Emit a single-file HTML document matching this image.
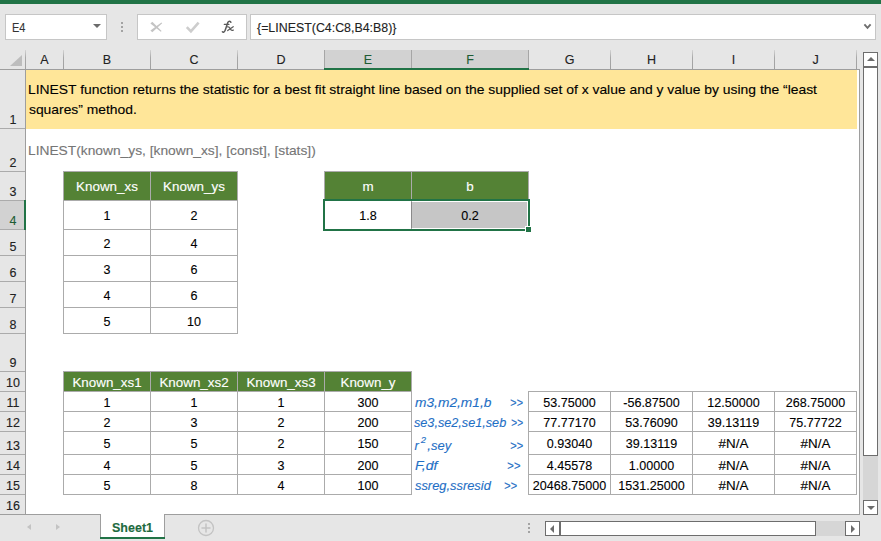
<!DOCTYPE html>
<html><head><meta charset="utf-8"><style>
html,body{margin:0;padding:0;}
body{width:881px;height:541px;overflow:hidden;position:relative;background:#e6e6e6;font-family:"Liberation Sans", sans-serif;}
body>div,body>svg{position:absolute;}
sup{font-size:9px;}
body>div{-webkit-text-stroke:0.12px currentColor;}
</style></head><body>
<div style="left:0px;top:0px;width:881px;height:4px;background:#217346;"></div>
<div style="left:5px;top:14px;width:102px;height:26px;background:#fff;border:1px solid #c6c6c6;box-sizing:border-box;"></div>
<div style="top:18.67px;font-size:12.5px;line-height:18px;color:#333;font-family:'Liberation Sans', sans-serif;white-space:pre;left:12.00px;transform:scaleX(0.8800);transform-origin:0 0;">E4</div>
<div style="left:92.5px;top:24px;width:0;height:0;border-left:4px solid transparent;border-right:4px solid transparent;border-top:4.5px solid #6b6b6b;"></div>
<div style="left:121px;top:22px;width:2px;height:2px;background:#a3a3a3;"></div>
<div style="left:121px;top:26px;width:2px;height:2px;background:#a3a3a3;"></div>
<div style="left:121px;top:30px;width:2px;height:2px;background:#a3a3a3;"></div>
<div style="left:137px;top:14px;width:110px;height:26px;background:#fff;border:1px solid #c6c6c6;box-sizing:border-box;"></div>
<svg style="left:0;top:0" width="881" height="50"><g fill="none" stroke-linecap="butt"><path d="M150.4 23.4 L152.3 21.8 L161.6 30.9 L160.8 31.8 Z M161.4 22.4 L162.2 23.3 L152.3 32.2 L150.4 30.5 Z" fill="#c4c4c4" stroke="none"/><path d="M186.8 27.2 L190.9 31.4 L198.6 22.6" stroke="#cdcdcd" stroke-width="2.6"/></g></svg>
<svg style="left:0;top:0" width="260" height="50"><g fill="none" stroke="#5a5a5a" stroke-linecap="round"><path d="M230.9 22.3 C230.5 20.9 228.6 20.8 227.9 22.3 L225.1 30.4 C224.6 32.1 223.2 32.6 222.4 31.8" stroke-width="1.5"/><path d="M224.3 24.4 H228.9" stroke-width="1.2"/><path d="M227.6 26.9 C228.8 26.5 229.4 27.1 230 28.3 L230.5 29.3 C231 30.3 232 30.6 233.3 30.1" stroke-width="1.3"/><path d="M233.2 26.7 L227.7 30.6" stroke-width="1.2"/></g></svg>
<div style="left:250px;top:14px;width:626px;height:26px;background:#fff;border:1px solid #c6c6c6;box-sizing:border-box;"></div>
<div style="top:19.70px;font-size:12.4px;line-height:17px;color:#222;font-family:'Liberation Sans', sans-serif;white-space:pre;left:257px;">{=LINEST(C4:C8,B4:B8)}</div>
<svg style="left:850px;top:14px" width="30" height="26"><path d="M14.4 10.4 L17.5 13.8 L20.6 10.4" fill="none" stroke="#6e6e6e" stroke-width="1.9"/></svg>
<div style="left:325px;top:50px;width:204px;height:18px;background:#d2d2d2;"></div>
<div style="left:25px;top:50px;width:1px;height:19px;background:linear-gradient(#d4d4d4, #a8a8a8 40%, #a0a0a0);"></div>
<div style="left:63px;top:50px;width:1px;height:19px;background:linear-gradient(#d4d4d4, #a8a8a8 40%, #a0a0a0);"></div>
<div style="left:150px;top:50px;width:1px;height:19px;background:linear-gradient(#d4d4d4, #a8a8a8 40%, #a0a0a0);"></div>
<div style="left:237px;top:50px;width:1px;height:19px;background:linear-gradient(#d4d4d4, #a8a8a8 40%, #a0a0a0);"></div>
<div style="left:324px;top:50px;width:1px;height:19px;background:#a6a6a6;"></div>
<div style="left:411px;top:50px;width:1px;height:19px;background:#a6a6a6;"></div>
<div style="left:528px;top:50px;width:1px;height:19px;background:#a6a6a6;"></div>
<div style="left:610px;top:50px;width:1px;height:19px;background:linear-gradient(#d4d4d4, #a8a8a8 40%, #a0a0a0);"></div>
<div style="left:692px;top:50px;width:1px;height:19px;background:linear-gradient(#d4d4d4, #a8a8a8 40%, #a0a0a0);"></div>
<div style="left:774px;top:50px;width:1px;height:19px;background:linear-gradient(#d4d4d4, #a8a8a8 40%, #a0a0a0);"></div>
<div style="left:856px;top:50px;width:1px;height:19px;background:linear-gradient(#d4d4d4, #a8a8a8 40%, #a0a0a0);"></div>
<div style="left:0px;top:69px;width:860px;height:1px;background:#9e9e9e;"></div>
<div style="left:324px;top:68px;width:205px;height:2px;background:#217346;"></div>
<div style="top:51.37px;font-size:12.5px;line-height:18px;color:#222;font-family:'Liberation Sans', sans-serif;white-space:pre;left:26px;width:37px;text-align:center;">A</div>
<div style="top:51.37px;font-size:12.5px;line-height:18px;color:#222;font-family:'Liberation Sans', sans-serif;white-space:pre;left:64px;width:86px;text-align:center;">B</div>
<div style="top:51.37px;font-size:12.5px;line-height:18px;color:#222;font-family:'Liberation Sans', sans-serif;white-space:pre;left:151px;width:86px;text-align:center;">C</div>
<div style="top:51.37px;font-size:12.5px;line-height:18px;color:#222;font-family:'Liberation Sans', sans-serif;white-space:pre;left:238px;width:86px;text-align:center;">D</div>
<div style="top:51.37px;font-size:12.5px;line-height:18px;color:#1d5c34;font-family:'Liberation Sans', sans-serif;white-space:pre;left:325px;width:86px;text-align:center;">E</div>
<div style="top:51.37px;font-size:12.5px;line-height:18px;color:#1d5c34;font-family:'Liberation Sans', sans-serif;white-space:pre;left:412px;width:116px;text-align:center;">F</div>
<div style="top:51.37px;font-size:12.5px;line-height:18px;color:#222;font-family:'Liberation Sans', sans-serif;white-space:pre;left:529px;width:81px;text-align:center;">G</div>
<div style="top:51.37px;font-size:12.5px;line-height:18px;color:#222;font-family:'Liberation Sans', sans-serif;white-space:pre;left:611px;width:81px;text-align:center;">H</div>
<div style="top:51.37px;font-size:12.5px;line-height:18px;color:#222;font-family:'Liberation Sans', sans-serif;white-space:pre;left:693px;width:81px;text-align:center;">I</div>
<div style="top:51.37px;font-size:12.5px;line-height:18px;color:#222;font-family:'Liberation Sans', sans-serif;white-space:pre;left:775px;width:81px;text-align:center;">J</div>
<div style="left:10px;top:55px;width:0;height:0;border-left:12px solid transparent;border-bottom:11px solid #bdbdbd;"></div>
<div style="left:0px;top:70px;width:25px;height:444px;background:#e6e6e6;"></div>
<div style="left:0px;top:201px;width:25px;height:28px;background:#d2d2d2;"></div>
<div style="left:0px;top:128px;width:25px;height:1px;background:#ababab;"></div>
<div style="left:0px;top:171px;width:25px;height:1px;background:#ababab;"></div>
<div style="left:0px;top:200px;width:25px;height:1px;background:#ababab;"></div>
<div style="left:0px;top:229px;width:25px;height:1px;background:#ababab;"></div>
<div style="left:0px;top:255px;width:25px;height:1px;background:#ababab;"></div>
<div style="left:0px;top:281px;width:25px;height:1px;background:#ababab;"></div>
<div style="left:0px;top:307px;width:25px;height:1px;background:#ababab;"></div>
<div style="left:0px;top:333px;width:25px;height:1px;background:#ababab;"></div>
<div style="left:0px;top:371px;width:25px;height:1px;background:#ababab;"></div>
<div style="left:0px;top:391px;width:25px;height:1px;background:#ababab;"></div>
<div style="left:0px;top:411px;width:25px;height:1px;background:#ababab;"></div>
<div style="left:0px;top:431px;width:25px;height:1px;background:#ababab;"></div>
<div style="left:0px;top:454px;width:25px;height:1px;background:#ababab;"></div>
<div style="left:0px;top:474px;width:25px;height:1px;background:#ababab;"></div>
<div style="left:0px;top:494px;width:25px;height:1px;background:#ababab;"></div>
<div style="left:0px;top:514px;width:25px;height:1px;background:#ababab;"></div>
<div style="left:25px;top:69px;width:1px;height:446px;background:#9e9e9e;"></div>
<div style="left:24px;top:200px;width:2px;height:30px;background:#217346;"></div>
<div style="top:111.17px;font-size:12.5px;line-height:18px;color:#222;font-family:'Liberation Sans', sans-serif;white-space:pre;left:0px;width:26px;text-align:center;">1</div>
<div style="top:154.17px;font-size:12.5px;line-height:18px;color:#222;font-family:'Liberation Sans', sans-serif;white-space:pre;left:0px;width:26px;text-align:center;">2</div>
<div style="top:183.17px;font-size:12.5px;line-height:18px;color:#222;font-family:'Liberation Sans', sans-serif;white-space:pre;left:0px;width:26px;text-align:center;">3</div>
<div style="top:212.17px;font-size:12.5px;line-height:18px;color:#1d5c34;font-family:'Liberation Sans', sans-serif;white-space:pre;left:0px;width:26px;text-align:center;">4</div>
<div style="top:238.17px;font-size:12.5px;line-height:18px;color:#222;font-family:'Liberation Sans', sans-serif;white-space:pre;left:0px;width:26px;text-align:center;">5</div>
<div style="top:264.17px;font-size:12.5px;line-height:18px;color:#222;font-family:'Liberation Sans', sans-serif;white-space:pre;left:0px;width:26px;text-align:center;">6</div>
<div style="top:290.17px;font-size:12.5px;line-height:18px;color:#222;font-family:'Liberation Sans', sans-serif;white-space:pre;left:0px;width:26px;text-align:center;">7</div>
<div style="top:316.17px;font-size:12.5px;line-height:18px;color:#222;font-family:'Liberation Sans', sans-serif;white-space:pre;left:0px;width:26px;text-align:center;">8</div>
<div style="top:354.17px;font-size:12.5px;line-height:18px;color:#222;font-family:'Liberation Sans', sans-serif;white-space:pre;left:0px;width:26px;text-align:center;">9</div>
<div style="top:374.17px;font-size:12.5px;line-height:18px;color:#222;font-family:'Liberation Sans', sans-serif;white-space:pre;left:0px;width:26px;text-align:center;">10</div>
<div style="top:394.17px;font-size:12.5px;line-height:18px;color:#222;font-family:'Liberation Sans', sans-serif;white-space:pre;left:0px;width:26px;text-align:center;">11</div>
<div style="top:414.17px;font-size:12.5px;line-height:18px;color:#222;font-family:'Liberation Sans', sans-serif;white-space:pre;left:0px;width:26px;text-align:center;">12</div>
<div style="top:437.17px;font-size:12.5px;line-height:18px;color:#222;font-family:'Liberation Sans', sans-serif;white-space:pre;left:0px;width:26px;text-align:center;">13</div>
<div style="top:457.17px;font-size:12.5px;line-height:18px;color:#222;font-family:'Liberation Sans', sans-serif;white-space:pre;left:0px;width:26px;text-align:center;">14</div>
<div style="top:477.17px;font-size:12.5px;line-height:18px;color:#222;font-family:'Liberation Sans', sans-serif;white-space:pre;left:0px;width:26px;text-align:center;">15</div>
<div style="top:497.17px;font-size:12.5px;line-height:18px;color:#222;font-family:'Liberation Sans', sans-serif;white-space:pre;left:0px;width:26px;text-align:center;">16</div>
<div style="left:26px;top:70px;width:833px;height:444px;background:#fff;"></div>
<div style="left:859px;top:69px;width:1px;height:446px;background:#9e9e9e;"></div>
<div style="left:0px;top:514px;width:101px;height:1px;background:#9e9e9e;"></div>
<div style="left:164px;top:514px;width:696px;height:1px;background:#9e9e9e;"></div>
<div style="left:26px;top:70px;width:831px;height:59px;background:#ffe699;"></div>
<div style="top:80.50px;font-size:13px;line-height:18px;color:#000;font-family:'Liberation Sans', sans-serif;white-space:pre;left:27.90px;transform:scaleX(1.0676);transform-origin:0 0;">LINEST function returns the statistic for a best fit straight line based on the supplied set of x value and y value by using the “least</div>
<div style="top:100.70px;font-size:13px;line-height:18px;color:#000;font-family:'Liberation Sans', sans-serif;white-space:pre;left:28.5px;transform:scaleX(1.065);transform-origin:0 0;">squares” method.</div>
<div style="top:142.10px;font-size:13px;line-height:18px;color:#767676;font-family:'Liberation Sans', sans-serif;white-space:pre;left:27.60px;transform:scaleX(1.0592);transform-origin:0 0;">LINEST(known_ys, [known_xs], [const], [stats])</div>
<div style="left:64px;top:172px;width:173px;height:28px;background:#548235;"></div>
<div style="left:63px;top:171px;width:1px;height:163px;background:#ababab;"></div>
<div style="left:150px;top:171px;width:1px;height:163px;background:#ababab;"></div>
<div style="left:237px;top:171px;width:1px;height:163px;background:#ababab;"></div>
<div style="left:63px;top:171px;width:175px;height:1px;background:#ababab;"></div>
<div style="left:63px;top:200px;width:175px;height:1px;background:#ababab;"></div>
<div style="left:63px;top:229px;width:175px;height:1px;background:#ababab;"></div>
<div style="left:63px;top:255px;width:175px;height:1px;background:#ababab;"></div>
<div style="left:63px;top:281px;width:175px;height:1px;background:#ababab;"></div>
<div style="left:63px;top:307px;width:175px;height:1px;background:#ababab;"></div>
<div style="left:63px;top:333px;width:175px;height:1px;background:#ababab;"></div>
<div style="top:178.00px;font-size:13px;line-height:18px;color:#fff;font-family:'Liberation Sans', sans-serif;white-space:pre;left:64px;width:86px;text-align:center;transform:scaleX(1.03);transform-origin:50% 0;">Known_xs</div>
<div style="top:178.00px;font-size:13px;line-height:18px;color:#fff;font-family:'Liberation Sans', sans-serif;white-space:pre;left:151px;width:86px;text-align:center;transform:scaleX(1.03);transform-origin:50% 0;">Known_ys</div>
<div style="top:207.00px;font-size:13px;line-height:18px;color:#000;font-family:'Liberation Sans', sans-serif;white-space:pre;left:64px;width:86px;text-align:center;transform:scaleX(0.965);transform-origin:50% 0;">1</div>
<div style="top:207.00px;font-size:13px;line-height:18px;color:#000;font-family:'Liberation Sans', sans-serif;white-space:pre;left:151px;width:86px;text-align:center;transform:scaleX(0.965);transform-origin:50% 0;">2</div>
<div style="top:234.50px;font-size:13px;line-height:18px;color:#000;font-family:'Liberation Sans', sans-serif;white-space:pre;left:64px;width:86px;text-align:center;transform:scaleX(0.965);transform-origin:50% 0;">2</div>
<div style="top:234.50px;font-size:13px;line-height:18px;color:#000;font-family:'Liberation Sans', sans-serif;white-space:pre;left:151px;width:86px;text-align:center;transform:scaleX(0.965);transform-origin:50% 0;">4</div>
<div style="top:260.50px;font-size:13px;line-height:18px;color:#000;font-family:'Liberation Sans', sans-serif;white-space:pre;left:64px;width:86px;text-align:center;transform:scaleX(0.965);transform-origin:50% 0;">3</div>
<div style="top:260.50px;font-size:13px;line-height:18px;color:#000;font-family:'Liberation Sans', sans-serif;white-space:pre;left:151px;width:86px;text-align:center;transform:scaleX(0.965);transform-origin:50% 0;">6</div>
<div style="top:286.50px;font-size:13px;line-height:18px;color:#000;font-family:'Liberation Sans', sans-serif;white-space:pre;left:64px;width:86px;text-align:center;transform:scaleX(0.965);transform-origin:50% 0;">4</div>
<div style="top:286.50px;font-size:13px;line-height:18px;color:#000;font-family:'Liberation Sans', sans-serif;white-space:pre;left:151px;width:86px;text-align:center;transform:scaleX(0.965);transform-origin:50% 0;">6</div>
<div style="top:312.50px;font-size:13px;line-height:18px;color:#000;font-family:'Liberation Sans', sans-serif;white-space:pre;left:64px;width:86px;text-align:center;transform:scaleX(0.965);transform-origin:50% 0;">5</div>
<div style="top:312.50px;font-size:13px;line-height:18px;color:#000;font-family:'Liberation Sans', sans-serif;white-space:pre;left:151px;width:86px;text-align:center;transform:scaleX(0.965);transform-origin:50% 0;">10</div>
<div style="left:325px;top:172px;width:203px;height:28px;background:#548235;"></div>
<div style="left:324px;top:171px;width:1px;height:59px;background:#ababab;"></div>
<div style="left:411px;top:171px;width:1px;height:59px;background:#ababab;"></div>
<div style="left:528px;top:171px;width:1px;height:59px;background:#ababab;"></div>
<div style="left:324px;top:171px;width:205px;height:1px;background:#ababab;"></div>
<div style="left:324px;top:200px;width:205px;height:1px;background:#ababab;"></div>
<div style="left:324px;top:229px;width:205px;height:1px;background:#ababab;"></div>
<div style="left:412px;top:202px;width:115px;height:26px;background:#c6c6c6;"></div>
<div style="left:411px;top:202px;width:1px;height:26px;background:#8a8a8a;"></div>
<div style="top:178.00px;font-size:13px;line-height:18px;color:#fff;font-family:'Liberation Sans', sans-serif;white-space:pre;left:325px;width:86px;text-align:center;transform:scaleX(1.03);transform-origin:50% 0;">m</div>
<div style="top:178.00px;font-size:13px;line-height:18px;color:#fff;font-family:'Liberation Sans', sans-serif;white-space:pre;left:412px;width:116px;text-align:center;transform:scaleX(1.03);transform-origin:50% 0;">b</div>
<div style="top:207.00px;font-size:13px;line-height:18px;color:#000;font-family:'Liberation Sans', sans-serif;white-space:pre;left:325px;width:86px;text-align:center;transform:scaleX(0.965);transform-origin:50% 0;">1.8</div>
<div style="top:207.00px;font-size:13px;line-height:18px;color:#000;font-family:'Liberation Sans', sans-serif;white-space:pre;left:412px;width:116px;text-align:center;transform:scaleX(0.965);transform-origin:50% 0;">0.2</div>
<div style="left:323px;top:199px;width:2px;height:32px;background:#217346;"></div>
<div style="left:323px;top:199px;width:207px;height:2px;background:#217346;"></div>
<div style="left:528px;top:199px;width:2px;height:27px;background:#217346;"></div>
<div style="left:323px;top:229px;width:202px;height:2px;background:#217346;"></div>
<div style="left:525px;top:226px;width:7px;height:7px;background:#fff;"></div>
<div style="left:526px;top:227px;width:5px;height:5px;background:#217346;"></div>
<div style="left:64px;top:372px;width:347px;height:19px;background:#548235;"></div>
<div style="left:63px;top:371px;width:1px;height:124px;background:#ababab;"></div>
<div style="left:150px;top:371px;width:1px;height:124px;background:#ababab;"></div>
<div style="left:237px;top:371px;width:1px;height:124px;background:#ababab;"></div>
<div style="left:324px;top:371px;width:1px;height:124px;background:#ababab;"></div>
<div style="left:411px;top:371px;width:1px;height:124px;background:#ababab;"></div>
<div style="left:63px;top:371px;width:349px;height:1px;background:#ababab;"></div>
<div style="left:63px;top:391px;width:349px;height:1px;background:#ababab;"></div>
<div style="left:63px;top:411px;width:349px;height:1px;background:#ababab;"></div>
<div style="left:63px;top:431px;width:349px;height:1px;background:#ababab;"></div>
<div style="left:63px;top:454px;width:349px;height:1px;background:#ababab;"></div>
<div style="left:63px;top:474px;width:349px;height:1px;background:#ababab;"></div>
<div style="left:63px;top:494px;width:349px;height:1px;background:#ababab;"></div>
<div style="top:373.50px;font-size:13px;line-height:18px;color:#fff;font-family:'Liberation Sans', sans-serif;white-space:pre;left:64px;width:86px;text-align:center;transform:scaleX(1.03);transform-origin:50% 0;">Known_xs1</div>
<div style="top:373.50px;font-size:13px;line-height:18px;color:#fff;font-family:'Liberation Sans', sans-serif;white-space:pre;left:151px;width:86px;text-align:center;transform:scaleX(1.03);transform-origin:50% 0;">Known_xs2</div>
<div style="top:373.50px;font-size:13px;line-height:18px;color:#fff;font-family:'Liberation Sans', sans-serif;white-space:pre;left:238px;width:86px;text-align:center;transform:scaleX(1.03);transform-origin:50% 0;">Known_xs3</div>
<div style="top:373.50px;font-size:13px;line-height:18px;color:#fff;font-family:'Liberation Sans', sans-serif;white-space:pre;left:325px;width:86px;text-align:center;transform:scaleX(1.03);transform-origin:50% 0;">Known_y</div>
<div style="top:393.50px;font-size:13px;line-height:18px;color:#000;font-family:'Liberation Sans', sans-serif;white-space:pre;left:64px;width:86px;text-align:center;transform:scaleX(0.965);transform-origin:50% 0;">1</div>
<div style="top:393.50px;font-size:13px;line-height:18px;color:#000;font-family:'Liberation Sans', sans-serif;white-space:pre;left:151px;width:86px;text-align:center;transform:scaleX(0.965);transform-origin:50% 0;">1</div>
<div style="top:393.50px;font-size:13px;line-height:18px;color:#000;font-family:'Liberation Sans', sans-serif;white-space:pre;left:238px;width:86px;text-align:center;transform:scaleX(0.965);transform-origin:50% 0;">1</div>
<div style="top:393.50px;font-size:13px;line-height:18px;color:#000;font-family:'Liberation Sans', sans-serif;white-space:pre;left:325px;width:86px;text-align:center;transform:scaleX(0.965);transform-origin:50% 0;">300</div>
<div style="top:413.50px;font-size:13px;line-height:18px;color:#000;font-family:'Liberation Sans', sans-serif;white-space:pre;left:64px;width:86px;text-align:center;transform:scaleX(0.965);transform-origin:50% 0;">2</div>
<div style="top:413.50px;font-size:13px;line-height:18px;color:#000;font-family:'Liberation Sans', sans-serif;white-space:pre;left:151px;width:86px;text-align:center;transform:scaleX(0.965);transform-origin:50% 0;">3</div>
<div style="top:413.50px;font-size:13px;line-height:18px;color:#000;font-family:'Liberation Sans', sans-serif;white-space:pre;left:238px;width:86px;text-align:center;transform:scaleX(0.965);transform-origin:50% 0;">2</div>
<div style="top:413.50px;font-size:13px;line-height:18px;color:#000;font-family:'Liberation Sans', sans-serif;white-space:pre;left:325px;width:86px;text-align:center;transform:scaleX(0.965);transform-origin:50% 0;">200</div>
<div style="top:435.00px;font-size:13px;line-height:18px;color:#000;font-family:'Liberation Sans', sans-serif;white-space:pre;left:64px;width:86px;text-align:center;transform:scaleX(0.965);transform-origin:50% 0;">5</div>
<div style="top:435.00px;font-size:13px;line-height:18px;color:#000;font-family:'Liberation Sans', sans-serif;white-space:pre;left:151px;width:86px;text-align:center;transform:scaleX(0.965);transform-origin:50% 0;">5</div>
<div style="top:435.00px;font-size:13px;line-height:18px;color:#000;font-family:'Liberation Sans', sans-serif;white-space:pre;left:238px;width:86px;text-align:center;transform:scaleX(0.965);transform-origin:50% 0;">2</div>
<div style="top:435.00px;font-size:13px;line-height:18px;color:#000;font-family:'Liberation Sans', sans-serif;white-space:pre;left:325px;width:86px;text-align:center;transform:scaleX(0.965);transform-origin:50% 0;">150</div>
<div style="top:456.50px;font-size:13px;line-height:18px;color:#000;font-family:'Liberation Sans', sans-serif;white-space:pre;left:64px;width:86px;text-align:center;transform:scaleX(0.965);transform-origin:50% 0;">4</div>
<div style="top:456.50px;font-size:13px;line-height:18px;color:#000;font-family:'Liberation Sans', sans-serif;white-space:pre;left:151px;width:86px;text-align:center;transform:scaleX(0.965);transform-origin:50% 0;">5</div>
<div style="top:456.50px;font-size:13px;line-height:18px;color:#000;font-family:'Liberation Sans', sans-serif;white-space:pre;left:238px;width:86px;text-align:center;transform:scaleX(0.965);transform-origin:50% 0;">3</div>
<div style="top:456.50px;font-size:13px;line-height:18px;color:#000;font-family:'Liberation Sans', sans-serif;white-space:pre;left:325px;width:86px;text-align:center;transform:scaleX(0.965);transform-origin:50% 0;">200</div>
<div style="top:476.50px;font-size:13px;line-height:18px;color:#000;font-family:'Liberation Sans', sans-serif;white-space:pre;left:64px;width:86px;text-align:center;transform:scaleX(0.965);transform-origin:50% 0;">5</div>
<div style="top:476.50px;font-size:13px;line-height:18px;color:#000;font-family:'Liberation Sans', sans-serif;white-space:pre;left:151px;width:86px;text-align:center;transform:scaleX(0.965);transform-origin:50% 0;">8</div>
<div style="top:476.50px;font-size:13px;line-height:18px;color:#000;font-family:'Liberation Sans', sans-serif;white-space:pre;left:238px;width:86px;text-align:center;transform:scaleX(0.965);transform-origin:50% 0;">4</div>
<div style="top:476.50px;font-size:13px;line-height:18px;color:#000;font-family:'Liberation Sans', sans-serif;white-space:pre;left:325px;width:86px;text-align:center;transform:scaleX(0.965);transform-origin:50% 0;">100</div>
<div style="left:528px;top:391px;width:1px;height:104px;background:#ababab;"></div>
<div style="left:610px;top:391px;width:1px;height:104px;background:#ababab;"></div>
<div style="left:692px;top:391px;width:1px;height:104px;background:#ababab;"></div>
<div style="left:774px;top:391px;width:1px;height:104px;background:#ababab;"></div>
<div style="left:856px;top:391px;width:1px;height:104px;background:#ababab;"></div>
<div style="left:528px;top:391px;width:329px;height:1px;background:#ababab;"></div>
<div style="left:528px;top:411px;width:329px;height:1px;background:#ababab;"></div>
<div style="left:528px;top:431px;width:329px;height:1px;background:#ababab;"></div>
<div style="left:528px;top:454px;width:329px;height:1px;background:#ababab;"></div>
<div style="left:528px;top:474px;width:329px;height:1px;background:#ababab;"></div>
<div style="left:528px;top:494px;width:329px;height:1px;background:#ababab;"></div>
<div style="top:393.50px;font-size:13px;line-height:18px;color:#000;font-family:'Liberation Sans', sans-serif;white-space:pre;left:529px;width:81px;text-align:center;transform:scaleX(0.965);transform-origin:50% 0;">53.75000</div>
<div style="top:393.50px;font-size:13px;line-height:18px;color:#000;font-family:'Liberation Sans', sans-serif;white-space:pre;left:611px;width:81px;text-align:center;transform:scaleX(0.965);transform-origin:50% 0;">-56.87500</div>
<div style="top:393.50px;font-size:13px;line-height:18px;color:#000;font-family:'Liberation Sans', sans-serif;white-space:pre;left:693px;width:81px;text-align:center;transform:scaleX(0.965);transform-origin:50% 0;">12.50000</div>
<div style="top:393.50px;font-size:13px;line-height:18px;color:#000;font-family:'Liberation Sans', sans-serif;white-space:pre;left:775px;width:81px;text-align:center;transform:scaleX(0.965);transform-origin:50% 0;">268.75000</div>
<div style="top:413.50px;font-size:13px;line-height:18px;color:#000;font-family:'Liberation Sans', sans-serif;white-space:pre;left:529px;width:81px;text-align:center;transform:scaleX(0.965);transform-origin:50% 0;">77.77170</div>
<div style="top:413.50px;font-size:13px;line-height:18px;color:#000;font-family:'Liberation Sans', sans-serif;white-space:pre;left:611px;width:81px;text-align:center;transform:scaleX(0.965);transform-origin:50% 0;">53.76090</div>
<div style="top:413.50px;font-size:13px;line-height:18px;color:#000;font-family:'Liberation Sans', sans-serif;white-space:pre;left:693px;width:81px;text-align:center;transform:scaleX(0.965);transform-origin:50% 0;">39.13119</div>
<div style="top:413.50px;font-size:13px;line-height:18px;color:#000;font-family:'Liberation Sans', sans-serif;white-space:pre;left:775px;width:81px;text-align:center;transform:scaleX(0.965);transform-origin:50% 0;">75.77722</div>
<div style="top:435.00px;font-size:13px;line-height:18px;color:#000;font-family:'Liberation Sans', sans-serif;white-space:pre;left:529px;width:81px;text-align:center;transform:scaleX(0.965);transform-origin:50% 0;">0.93040</div>
<div style="top:435.00px;font-size:13px;line-height:18px;color:#000;font-family:'Liberation Sans', sans-serif;white-space:pre;left:611px;width:81px;text-align:center;transform:scaleX(0.965);transform-origin:50% 0;">39.13119</div>
<div style="top:435.00px;font-size:13px;line-height:18px;color:#000;font-family:'Liberation Sans', sans-serif;white-space:pre;left:693px;width:81px;text-align:center;transform:scaleX(1.03);transform-origin:50% 0;">#N/A</div>
<div style="top:435.00px;font-size:13px;line-height:18px;color:#000;font-family:'Liberation Sans', sans-serif;white-space:pre;left:775px;width:81px;text-align:center;transform:scaleX(1.03);transform-origin:50% 0;">#N/A</div>
<div style="top:456.50px;font-size:13px;line-height:18px;color:#000;font-family:'Liberation Sans', sans-serif;white-space:pre;left:529px;width:81px;text-align:center;transform:scaleX(0.965);transform-origin:50% 0;">4.45578</div>
<div style="top:456.50px;font-size:13px;line-height:18px;color:#000;font-family:'Liberation Sans', sans-serif;white-space:pre;left:611px;width:81px;text-align:center;transform:scaleX(0.965);transform-origin:50% 0;">1.00000</div>
<div style="top:456.50px;font-size:13px;line-height:18px;color:#000;font-family:'Liberation Sans', sans-serif;white-space:pre;left:693px;width:81px;text-align:center;transform:scaleX(1.03);transform-origin:50% 0;">#N/A</div>
<div style="top:456.50px;font-size:13px;line-height:18px;color:#000;font-family:'Liberation Sans', sans-serif;white-space:pre;left:775px;width:81px;text-align:center;transform:scaleX(1.03);transform-origin:50% 0;">#N/A</div>
<div style="top:476.50px;font-size:13px;line-height:18px;color:#000;font-family:'Liberation Sans', sans-serif;white-space:pre;left:529px;width:81px;text-align:center;transform:scaleX(0.965);transform-origin:50% 0;">20468.75000</div>
<div style="top:476.50px;font-size:13px;line-height:18px;color:#000;font-family:'Liberation Sans', sans-serif;white-space:pre;left:611px;width:81px;text-align:center;transform:scaleX(0.965);transform-origin:50% 0;">1531.25000</div>
<div style="top:476.50px;font-size:13px;line-height:18px;color:#000;font-family:'Liberation Sans', sans-serif;white-space:pre;left:693px;width:81px;text-align:center;transform:scaleX(1.03);transform-origin:50% 0;">#N/A</div>
<div style="top:476.50px;font-size:13px;line-height:18px;color:#000;font-family:'Liberation Sans', sans-serif;white-space:pre;left:775px;width:81px;text-align:center;transform:scaleX(1.03);transform-origin:50% 0;">#N/A</div>
<div style="top:393.80px;font-size:13px;line-height:18px;color:#1f6fc5;font-family:'Liberation Sans', sans-serif;white-space:pre;left:414.80px;transform:scaleX(1.0583);transform-origin:0 0;font-style:italic;">m3,m2,m1,b</div>
<div style="top:394.10px;font-size:13px;line-height:18px;color:#1f6fc5;font-family:'Liberation Sans', sans-serif;white-space:pre;left:509.50px;transform:scaleX(0.8438);transform-origin:0 0;font-style:italic;">&gt;&gt;</div>
<div style="top:413.80px;font-size:13px;line-height:18px;color:#1f6fc5;font-family:'Liberation Sans', sans-serif;white-space:pre;left:414.20px;transform:scaleX(0.9737);transform-origin:0 0;font-style:italic;">se3,se2,se1,seb</div>
<div style="top:414.10px;font-size:13px;line-height:18px;color:#1f6fc5;font-family:'Liberation Sans', sans-serif;white-space:pre;left:510.80px;transform:scaleX(0.7937);transform-origin:0 0;font-style:italic;">&gt;&gt;</div>
<div style="top:437.00px;font-size:13px;line-height:18px;color:#1f6fc5;font-family:'Liberation Sans', sans-serif;white-space:pre;left:414.5px;font-style:italic;">r<span style="font-size:9.5px;position:relative;top:-7.3px;margin-left:2px">2</span><span style="margin-left:1.2px">,sey</span></div>
<div style="top:437.30px;font-size:13px;line-height:18px;color:#1f6fc5;font-family:'Liberation Sans', sans-serif;white-space:pre;left:509.50px;transform:scaleX(0.8687);transform-origin:0 0;font-style:italic;">&gt;&gt;</div>
<div style="top:456.70px;font-size:13px;line-height:18px;color:#1f6fc5;font-family:'Liberation Sans', sans-serif;white-space:pre;left:414.80px;transform:scaleX(1.0818);transform-origin:0 0;font-style:italic;">F,df</div>
<div style="top:457.00px;font-size:13px;line-height:18px;color:#1f6fc5;font-family:'Liberation Sans', sans-serif;white-space:pre;left:507.40px;transform:scaleX(0.8750);transform-origin:0 0;font-style:italic;">&gt;&gt;</div>
<div style="top:476.50px;font-size:13px;line-height:18px;color:#1f6fc5;font-family:'Liberation Sans', sans-serif;white-space:pre;left:414.80px;transform:scaleX(0.9896);transform-origin:0 0;font-style:italic;">ssreg,ssresid</div>
<div style="top:476.80px;font-size:13px;line-height:18px;color:#1f6fc5;font-family:'Liberation Sans', sans-serif;white-space:pre;left:503.70px;transform:scaleX(0.8562);transform-origin:0 0;font-style:italic;">&gt;&gt;</div>
<div style="left:863px;top:52px;width:15px;height:412px;"></div>
<div style="left:863px;top:52px;width:15px;height:16px;background:#fff;border:1px solid #6d6d6d;box-sizing:border-box;"></div>
<div style="left:863px;top:66px;width:15px;height:390px;background:#fff;border:1px solid #6d6d6d;box-sizing:border-box;"></div>
<div style="left:863px;top:66px;width:15px;height:2px;background:#6d6d6d;"></div>
<div style="left:863px;top:456px;width:15px;height:44px;background:#d6d6d6;"></div>
<div style="left:863px;top:500px;width:15px;height:15px;background:#fff;border:1px solid #6d6d6d;box-sizing:border-box;"></div>
<div style="left:866.5px;top:57px;width:0;height:0;border-left:4px solid transparent;border-right:4px solid transparent;border-bottom:4px solid #6b6b6b;"></div>
<div style="left:866.5px;top:506px;width:0;height:0;border-left:4px solid transparent;border-right:4px solid transparent;border-top:4px solid #6b6b6b;"></div>
<div style="left:27px;top:524px;width:0;height:0;border-top:3.5px solid transparent;border-bottom:3.5px solid transparent;border-right:4px solid #c3c3c3;"></div>
<div style="left:56px;top:524px;width:0;height:0;border-top:3.5px solid transparent;border-bottom:3.5px solid transparent;border-left:4px solid #c3c3c3;"></div>
<div style="left:100px;top:514px;width:65px;height:23px;background:#fff;"></div>
<div style="left:100px;top:514px;width:1px;height:24px;background:#9e9e9e;"></div>
<div style="left:164px;top:514px;width:1px;height:24px;background:#9e9e9e;"></div>
<div style="left:100px;top:537px;width:65px;height:2px;background:#217346;"></div>
<div style="top:519.17px;font-size:12.5px;line-height:18px;color:#1e6b3f;font-family:'Liberation Sans', sans-serif;white-space:pre;left:100px;width:65px;text-align:center;font-weight:bold;">Sheet1</div>
<svg style="left:196px;top:518px" width="20" height="20"><circle cx="10" cy="10" r="7.5" fill="none" stroke="#c3c3c3" stroke-width="1.3"/><path d="M10 5.5V14.5M5.5 10H14.5" stroke="#c3c3c3" stroke-width="1.5"/></svg>
<div style="left:528px;top:523px;width:2px;height:2px;background:#a3a3a3;"></div>
<div style="left:528px;top:527px;width:2px;height:2px;background:#a3a3a3;"></div>
<div style="left:528px;top:531px;width:2px;height:2px;background:#a3a3a3;"></div>
<div style="left:545px;top:521px;width:16px;height:15px;background:#fff;border:1px solid #6d6d6d;box-sizing:border-box;"></div>
<div style="left:559px;top:521px;width:257px;height:15px;background:#fff;border:1px solid #6d6d6d;box-sizing:border-box;"></div>
<div style="left:559px;top:521px;width:2px;height:15px;background:#6d6d6d;"></div>
<div style="left:816px;top:521px;width:29px;height:15px;background:#d6d6d6;"></div>
<div style="left:845px;top:521px;width:15px;height:15px;background:#fff;border:1px solid #6d6d6d;box-sizing:border-box;"></div>
<div style="left:550px;top:524.5px;width:0;height:0;border-top:4px solid transparent;border-bottom:4px solid transparent;border-right:4px solid #6b6b6b;"></div>
<div style="left:851px;top:524.5px;width:0;height:0;border-top:4px solid transparent;border-bottom:4px solid transparent;border-left:4px solid #6b6b6b;"></div>
</body></html>
